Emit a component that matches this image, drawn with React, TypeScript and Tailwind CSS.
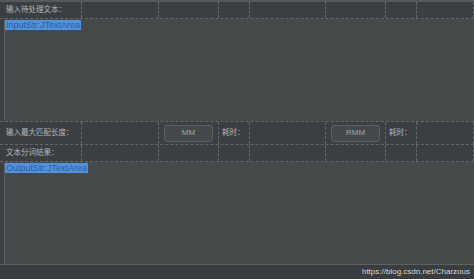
import React from 'react';

const cols = 'grid grid-cols-[82px_77px_60px_31px_76px_60px_31px_57px]';
const cell = 'border-r border-dashed border-[#65686b] flex items-center min-w-0';
const font = "font-['Liberation_Sans','Noto_Sans_CJK_SC',sans-serif]";

function Btn({ label }: { label: string }) {
  return (
    <div className="mx-[5px] w-full h-[17px] rounded-[3px] border border-[#5e6163] bg-[#44484a] flex items-center justify-center text-[8px] text-[#a2a5a7]">
      {label}
    </div>
  );
}

function LabelRow({ label, h }: { label: string; h: string }) {
  return (
    <div className={`${cols} ${h} border-b border-dashed border-[#65686b]`}>
      <div className={`${cell} pl-[6px] text-[7.5px] text-[#b4b6b8] whitespace-nowrap`}>{label}</div>
      {Array.from({ length: 7 }).map((_, i) => (
        <div key={i} className={cell} />
      ))}
    </div>
  );
}

function TextArea({ text }: { text: string }) {
  return (
    <div className="ml-[4px] h-[102px] bg-[#45494a] border-l border-[#5c5f62] pt-[1px] flex flex-col items-start">
      <span className="bg-[#5292dc] text-[#2a5c9e] text-[9px] leading-[10px] px-[1px]">{text}</span>
    </div>
  );
}

export default function App() {
  return (
    <div className={`w-[474px] h-[279px] bg-[#3c3f41] flex flex-col overflow-hidden ${font}`}>
      <div className="h-[2px] bg-[#56595c]" />
      <LabelRow label="输入待处理文本：" h="h-[17px]" />
      <TextArea text="InputStr:JTextArea" />

      <div className={`${cols} h-[24px] border-y border-dashed border-[#65686b]`}>
        <div className={`${cell} pl-[6px] text-[7.5px] text-[#b4b6b8] whitespace-nowrap`}>输入最大匹配长度：</div>
        <div className={cell} />
        <div className={cell}><Btn label="MM" /></div>
        <div className={`${cell} pl-[3px] text-[7.5px] text-[#b4b6b8] whitespace-nowrap`}>耗时：</div>
        <div className={cell} />
        <div className={cell}><Btn label="RMM" /></div>
        <div className={`${cell} pl-[3px] text-[7.5px] text-[#b4b6b8] whitespace-nowrap`}>耗时：</div>
        <div className={cell} />
      </div>

      <LabelRow label="文本分词结果：" h="h-[17px]" />
      <TextArea text="OutputStr:JTextArea" />

      <div className="flex-1 border-t border-[#5f6265] bg-[#3a3d3f] flex items-center justify-end pr-[4px]">
        <span className="text-[8px] text-[#d6d6d6]">https://blog.csdn.net/Charzous</span>
      </div>
    </div>
  );
}
